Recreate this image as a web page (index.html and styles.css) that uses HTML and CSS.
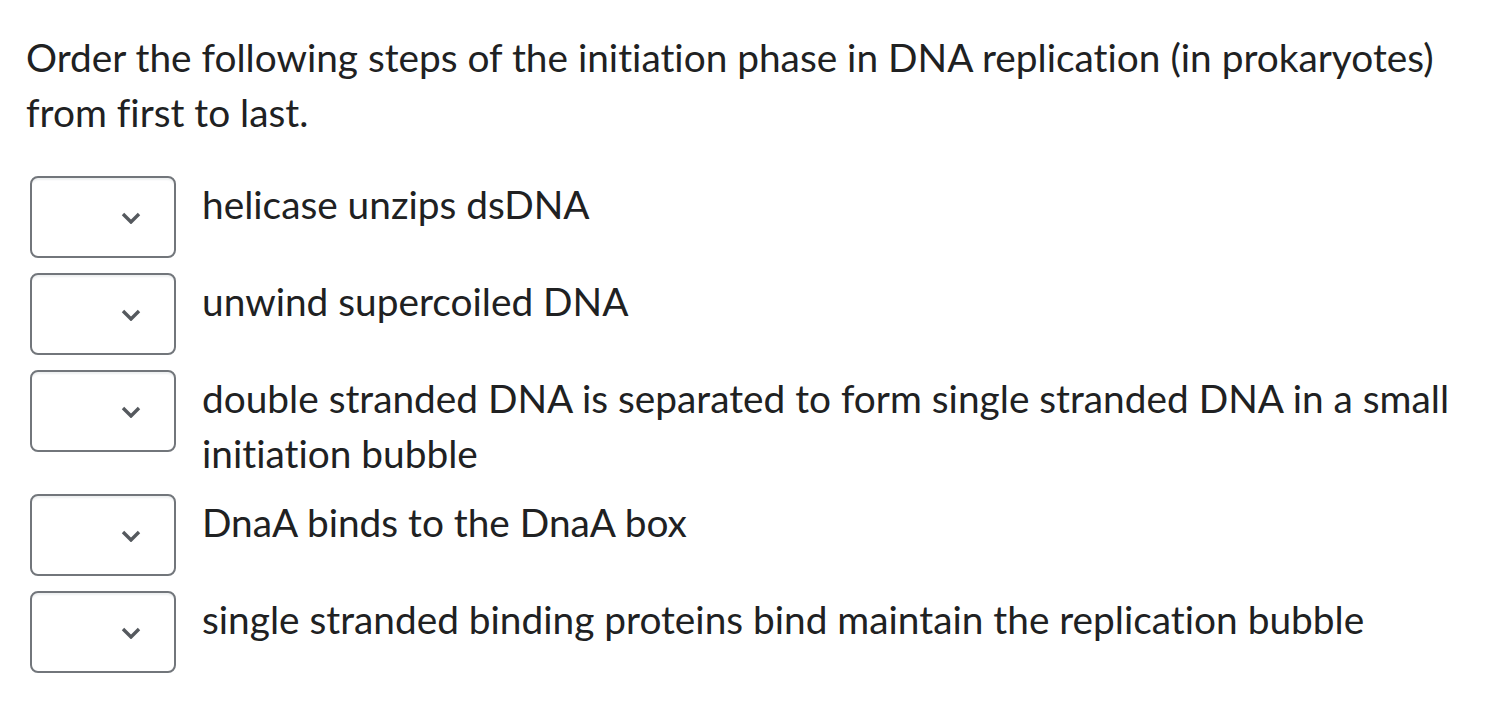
FILE: index.html
```html
<!DOCTYPE html>
<html lang="en">
<head>
    <meta charset="UTF-8">
    <title>Ordering question</title>
    <link rel="stylesheet" href="styles.css">
</head>
<body>

<div class="question">
    <p class="prompt">Order the following steps of the initiation phase in DNA replication (in prokaryotes) from first to last.</p>

    <div class="order-list">
        <div class="order-row">
            <div class="order-select">
                <svg class="chevron" viewBox="0 0 20 12"><polyline points="2,2 10,10 18,2"/></svg>
            </div>
            <div class="order-text">helicase unzips dsDNA</div>
        </div>
        <div class="order-row">
            <div class="order-select">
                <svg class="chevron" viewBox="0 0 20 12"><polyline points="2,2 10,10 18,2"/></svg>
            </div>
            <div class="order-text">unwind supercoiled DNA</div>
        </div>
        <div class="order-row">
            <div class="order-select">
                <svg class="chevron" viewBox="0 0 20 12"><polyline points="2,2 10,10 18,2"/></svg>
            </div>
            <div class="order-text">double stranded DNA is separated to form single stranded DNA in a small initiation bubble</div>
        </div>
        <div class="order-row">
            <div class="order-select">
                <svg class="chevron" viewBox="0 0 20 12"><polyline points="2,2 10,10 18,2"/></svg>
            </div>
            <div class="order-text">DnaA binds to the DnaA box</div>
        </div>
        <div class="order-row">
            <div class="order-select">
                <svg class="chevron" viewBox="0 0 20 12"><polyline points="2,2 10,10 18,2"/></svg>
            </div>
            <div class="order-text">single stranded binding proteins bind maintain the replication bubble</div>
        </div>
    </div>
</div>

</body>
</html>
```

FILE: styles.css
```css
body {
    font-family: 'Lato', 'Liberation Sans', sans-serif;
    margin: 0;
    padding: 0;
    background: #ffffff;
    color: #202122;
}
.question {
    padding: 30px 26px;
    font-size: 38.8px;
    font-variant-ligatures: none;
}
.prompt {
    margin: 0 0 36px 0;
    line-height: 55px;
}
.order-list {
    display: flex;
    flex-direction: column;
    gap: 15px;
    padding-left: 4px;
}
.order-row {
    display: flex;
    align-items: flex-start;
}
.order-select {
    box-sizing: border-box;
    flex: 0 0 146px;
    height: 82px;
    border: 2px solid #72767b;
    border-radius: 8px;
    background: #ffffff;
    box-shadow: inset 0 3px 2px -1px #eef0f1;
    display: flex;
    align-items: center;
    justify-content: flex-end;
    padding-right: 33px;
}
.chevron {
    width: 20px;
    height: 12px;
    transform: translateY(1px);
}
.chevron polyline {
    fill: none;
    stroke: #55595e;
    stroke-width: 3.4;
}
.order-text {
    margin: 1px 0 -2px 26px;
    line-height: 55px;
}
```
